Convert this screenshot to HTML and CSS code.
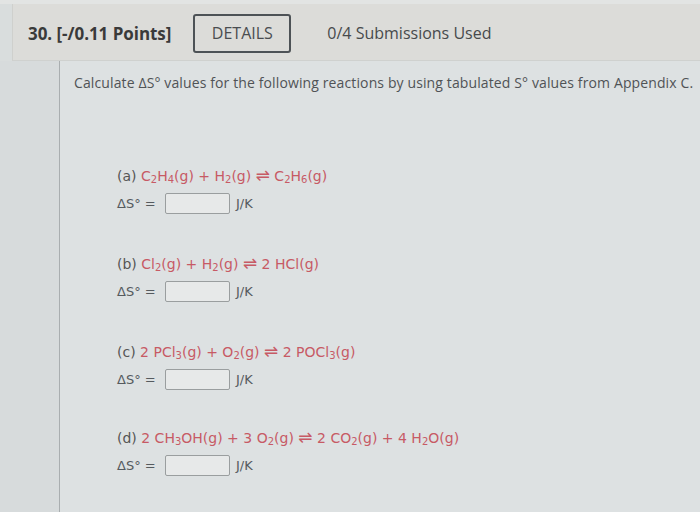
FILE: index.html
```html
<!DOCTYPE html>
<html>
<head>
<meta charset="utf-8">
<link rel="stylesheet" href="styles.css">
</head>
<body>
<div class="top-strip"></div>
<div class="header">
  <span class="qnum">30. [-/0.11 Points]</span>
  <span class="details-btn">DETAILS</span>
  <span class="subs">0/4 Submissions Used</span>
</div>
<div class="main">
  <div class="gutter"></div>
  <div class="content">
    <p class="prompt">Calculate &Delta;S&deg; values for the following reactions by using tabulated S&deg; values from Appendix C.</p>
    <div class="part">
      <div class="rxn"><span class="lbl">(a)</span> <span class="chem">C<sub>2</sub>H<sub>4</sub>(g) + H<sub>2</sub>(g) <span class="arrow">&#8652;</span> C<sub>2</sub>H<sub>6</sub>(g)</span></div>
      <div class="ans"><span class="ds">&Delta;S&deg; =</span><span class="box"></span><span class="unit">J/K</span></div>
    </div>
    <div class="part">
      <div class="rxn"><span class="lbl">(b)</span> <span class="chem">Cl<sub>2</sub>(g) + H<sub>2</sub>(g) <span class="arrow">&#8652;</span> 2 HCl(g)</span></div>
      <div class="ans"><span class="ds">&Delta;S&deg; =</span><span class="box"></span><span class="unit">J/K</span></div>
    </div>
    <div class="part">
      <div class="rxn"><span class="lbl">(c)</span> <span class="chem">2 PCl<sub>3</sub>(g) + O<sub>2</sub>(g) <span class="arrow">&#8652;</span> 2 POCl<sub>3</sub>(g)</span></div>
      <div class="ans"><span class="ds">&Delta;S&deg; =</span><span class="box"></span><span class="unit">J/K</span></div>
    </div>
    <div class="part last">
      <div class="rxn"><span class="lbl">(d)</span> <span class="chem">2 CH<sub>3</sub>OH(g) + 3 O<sub>2</sub>(g) <span class="arrow">&#8652;</span> 2 CO<sub>2</sub>(g) + 4 H<sub>2</sub>O(g)</span></div>
      <div class="ans"><span class="ds">&Delta;S&deg; =</span><span class="box"></span><span class="unit">J/K</span></div>
    </div>
  </div>
</div>
</body>
</html>
```
FILE: styles.css
```css
html, body {
  margin: 0;
  padding: 0;
  height: 100%;
}
body {
  background: #d9dddd;
  font-family: "Open Sans", "Liberation Sans", sans-serif;
  color: #444;
  overflow: hidden;
}
.top-strip {
  height: 4px;
  background: #e2e4e3;
}
.header {
  margin-left: 12px;
  height: 57px;
  background: #dcdcd9;
  border-left: 1px solid #cfd0cd;
  border-bottom: 1px solid #cfd1cf;
  display: flex;
  align-items: center;
  padding-left: 15px;
  padding-top: 2px;
  box-sizing: border-box;
}
.qnum {
  font-weight: bold;
  font-size: 17px;
  color: #3a3a3a;
  letter-spacing: -0.05px;
}
.details-btn {
  margin-left: 22px;
  width: 98px;
  height: 39px;
  box-sizing: border-box;
  border: 2px solid #4d5256;
  border-radius: 3px;
  display: flex;
  align-items: center;
  justify-content: center;
  font-size: 16px;
  color: #4a4d50;
}
.subs {
  margin-left: 36px;
  font-size: 16px;
  color: #474a4c;
}
.main {
  display: flex;
  height: 451px;
}
.gutter {
  width: 59px;
  background: #d7dbdc;
  border-right: 1px solid #a9aeb0;
}
.content {
  flex: 1;
  background: #dde1e2;
  padding-left: 14px;
  padding-top: 12px;
}
.prompt {
  margin: 0;
  font-size: 14px;
  color: #505356;
  letter-spacing: 0.12px;
}
.part {
  margin-left: 43px;
}
.part:first-of-type {
  margin-top: 74px;
}
.part + .part {
  margin-top: 40px;
}
.part.last {
  margin-top: 38px;
}
.rxn {
  font-family: "DejaVu Sans", Verdana, sans-serif;
  font-size: 14px;
  height: 20px;
  line-height: 20px;
  color: #555;
}
.chem {
  color: #c75a65;
}
.chem sub {
  font-size: 10px;
  vertical-align: -2px;
  line-height: 0;
}
.arrow {
  font-size: 17px;
  line-height: 0;
}
.ans {
  display: flex;
  align-items: center;
  margin-top: 7px;
  font-family: "DejaVu Sans", Verdana, sans-serif;
  font-size: 13px;
  color: #555a5e;
}
.ds {
  width: 48px;
}
.box {
  width: 65px;
  height: 21px;
  box-sizing: border-box;
  border: 1px solid #9a9e9f;
  border-radius: 2px;
  background: #e7e9e9;
}
.unit {
  margin-left: 6px;
  font-size: 13px;
}
```
